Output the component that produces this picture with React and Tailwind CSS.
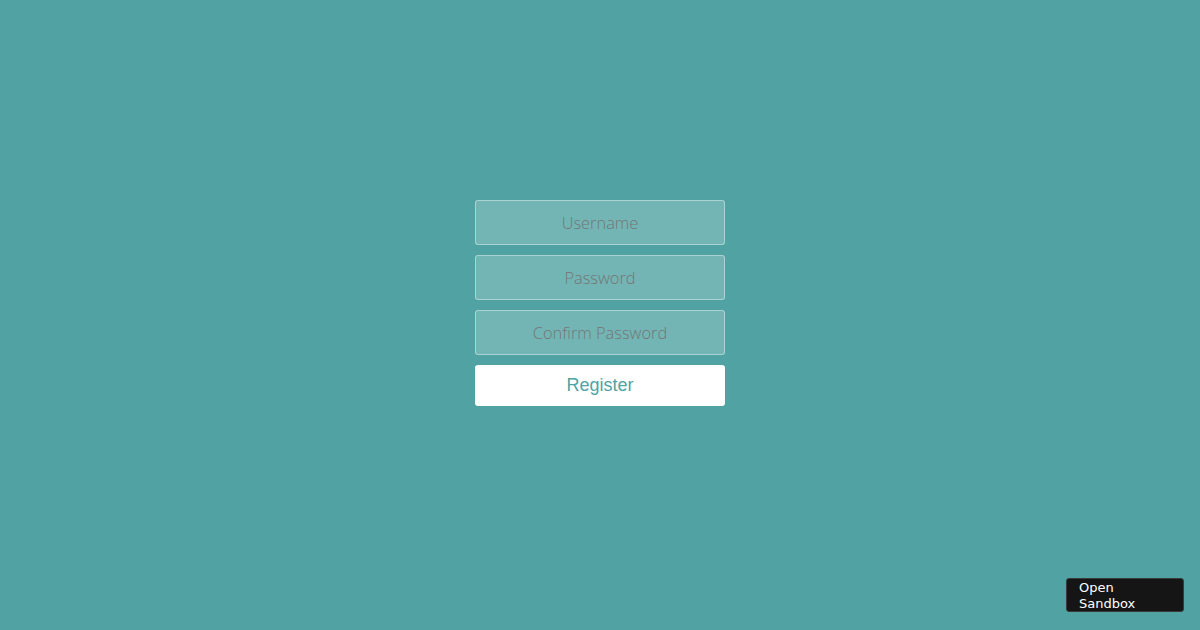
import React from 'react';

function Field({ type, placeholder }) {
    return (
        <input
            type={type}
            placeholder={placeholder}
            className="block w-[250px] h-[45px] rounded-[3px] border border-white/40 bg-white/20 px-[15px] text-center text-[16.4px] font-light text-white outline-none placeholder:text-[#757575] font-['Open_Sans',sans-serif]"
        />
    );
}

export default function App() {
    return (
        <div className="relative w-full h-[630px] bg-[#50a3a2] overflow-hidden">
            <form className="flex flex-col items-center gap-[10px] pt-[200px]" onSubmit={(e) => e.preventDefault()}>
                <Field type="text" placeholder="Username" />
                <Field type="password" placeholder="Password" />
                <Field type="password" placeholder="Confirm Password" />
                <button
                    type="submit"
                    className="w-[250px] h-[41px] rounded-[3px] bg-white text-[18px] text-[#50a3a2] font-['Liberation_Sans',Arial,sans-serif]"
                >
                    Register
                </button>
            </form>
            <a
                href="#"
                className="absolute right-[16px] bottom-[18px] w-[118px] h-[34px] rounded-[3px] border border-[#3a3a3a] bg-[#151515] pl-[12px] pr-[40px] pt-px text-[13px] leading-[16px] text-white font-['DejaVu_Sans',sans-serif]"
            >
                Open Sandbox
            </a>
        </div>
    );
}
